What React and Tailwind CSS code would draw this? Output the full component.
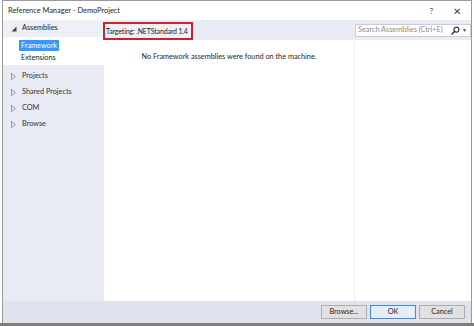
import React from 'react';

const font = { fontFamily: 'Lato, "Noto Sans", sans-serif' };

function Expanded() {
    return (
        <svg width="6" height="6" viewBox="0 0 6 6" className="shrink-0">
            <path d="M5.5 0.5 L5.5 5.5 L0.5 5.5 Z" fill="#444" />
        </svg>
    );
}

function Collapsed() {
    return (
        <svg width="5" height="7" viewBox="0 0 5 7" className="shrink-0">
            <path d="M0.5 0.5 L4.5 3.5 L0.5 6.5 Z" fill="none" stroke="#8a8a8a" strokeWidth="0.9" />
        </svg>
    );
}

function SearchIcon() {
    return (
        <svg width="9" height="9" viewBox="0 0 10 10">
            <circle cx="6" cy="4" r="2.8" fill="none" stroke="#333" strokeWidth="1.3" />
            <path d="M4 6 L1 9" stroke="#333" strokeWidth="1.6" strokeLinecap="round" />
        </svg>
    );
}

function NavItem({ label }) {
    return (
        <div className="h-[16px] flex items-center gap-[6px] pl-[8px] text-[#333]">
            <Collapsed />
            <span>{label}</span>
        </div>
    );
}

export default function App() {
    return (
        <div className="w-[474px] h-[326px] bg-white text-[7.3px] text-[#1e1e1e] overflow-hidden pl-[2px] whitespace-nowrap" style={font}>
            <div className="h-[323px] w-[470px] flex flex-col border-l border-r border-t border-[#9a9a9a] bg-white">
                {/* Title bar */}
                <div className="h-[19px] flex items-center pl-[5px] pr-[10px] shrink-0">
                    <span className="text-[7.4px]">Reference Manager - DemoProject</span>
                    <span className="ml-auto mr-[20px] text-[#444] text-[8px]">?</span>
                    <span className="text-[10px] text-[#444] leading-none">✕</span>
                </div>

                {/* Body */}
                <div className="flex flex-1 min-h-0">
                    {/* Left nav */}
                    <div className="w-[101px] bg-[#e8ebf4] shrink-0 flex flex-col">
                        <div className="h-[17px] flex items-center gap-[5px] pl-[8px] bg-[#edf0f6]">
                            <Expanded />
                            <span>Assemblies</span>
                        </div>
                        <div className="h-[28px] bg-white flex flex-col pl-[16px] pt-[3px]">
                            <span className="self-start bg-[#3399ff] text-white px-[2px] h-[11px] leading-[11px]">Framework</span>
                            <span className="pl-[2px] mt-[2px]">Extensions</span>
                        </div>
                        <div className="pt-[3px]">
                            <NavItem label="Projects" />
                            <NavItem label="Shared Projects" />
                            <NavItem label="COM" />
                            <NavItem label="Browse" />
                        </div>
                    </div>

                    {/* Main */}
                    <div className="flex-1 flex flex-col min-w-0">
                        <div className="h-[20px] bg-[#e9ecf4] flex items-end shrink-0">
                            <div className="h-[18px] w-[90px] border-2 border-[#d0202a] flex items-center pl-[1px] -ml-[1px] bg-[#eef0f6] text-[7px] tracking-[-0.15px]">
                                Targeting: .NETStandard 1.4
                            </div>
                            <div className="ml-auto mb-[3px] h-[13px] w-[116px] border border-[#c9ccd6] bg-white flex items-center pl-[2px] pr-[3px] text-[#8c8c8c]">
                                <span>Search Assemblies (Ctrl+E)</span>
                                <span className="ml-auto flex items-center gap-[2px]">
                                    <SearchIcon />
                                    <span className="text-[5px] text-[#444]">▼</span>
                                </span>
                            </div>
                        </div>
                        <div className="flex flex-1 min-h-0">
                            <div className="flex-1 flex justify-center pt-[12px] border-r border-[#eceef2]">
                                No Framework assemblies were found on the machine.
                            </div>
                            <div className="w-[116px] shrink-0"></div>
                        </div>
                    </div>
                </div>

                {/* Footer */}
                <div className="h-[22px] bg-[#dfe3ee] flex items-center justify-end gap-[3px] pr-[6px] shrink-0">
                    <button className="w-[46px] h-[14px] bg-[#e1e1e1] border border-[#adadad] text-[7.3px] leading-none">Browse...</button>
                    <button className="w-[46px] h-[14px] bg-[#e5eef8] border border-[#3c8fd8] text-[7.3px] leading-none">OK</button>
                    <button className="w-[46px] h-[14px] bg-[#e1e1e1] border border-[#adadad] text-[7.3px] leading-none">Cancel</button>
                </div>
            </div>
            <div className="h-[3px] -ml-[2px] w-[474px] bg-[#7d7d7d]"></div>
        </div>
    );
}
